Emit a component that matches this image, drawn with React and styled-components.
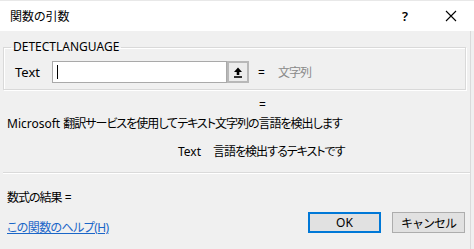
import React from "react";
import styled, { createGlobalStyle } from "styled-components";

const GlobalStyle = createGlobalStyle`
  html, body {
    margin: 0;
    padding: 0;
    background: #f0f0f0;
  }
  body {
    font-family: "Noto Sans", "Noto Sans CJK JP", sans-serif;
    font-size: 12px;
    color: #000;
    font-feature-settings: "palt";
  }
`;

const Dialog = styled.div`
  width: 474px;
  height: 249px;
  display: flex;
  flex-direction: column;
  overflow: hidden;
  background: #f0f0f0;
`;

const TitleBar = styled.div`
  height: 31px;
  flex: none;
  display: flex;
  align-items: center;
  padding-left: 10px;
  background: #fff;
  border-top: 1px solid #e8e8e8;
  box-sizing: border-box;
`;

const Title = styled.span`
  font-size: 12px;
`;

const TitleButton = styled.div`
  margin-left: ${(p) => (p.$first ? "auto" : "0")};
  width: 46px;
  height: 30px;
  display: flex;
  align-items: center;
  justify-content: center;
  font-size: 13px;
  font-weight: 600;
`;

const Body = styled.div`
  flex: 1;
  width: 470px;
  border-right: 1px solid #dadada;
  display: flex;
  flex-direction: column;
`;

const Jp = styled.span`
  letter-spacing: -1px;
`;

const Group = styled.fieldset`
  margin: 8px 0 0 3px;
  width: 463px;
  box-sizing: border-box;
  padding: 6px 10px 6px 11px;
  border: 1px solid #d9d9d9;
  box-shadow: inset 1px 1px 0 #fff, 1px 1px 0 #fff;
  min-width: 0;
`;

const Legend = styled.legend`
  margin-left: -4px;
  padding: 0 2px;
  line-height: 16px;
  font-size: 12px;
`;

const ArgRow = styled.div`
  display: flex;
  align-items: center;
  height: 22px;
`;

const ArgLabel = styled.span`
  width: 37px;
  font-size: 13px;
`;

const InputBox = styled.div`
  width: 175px;
  height: 22px;
  box-sizing: border-box;
  background: #fff;
  border: 1px solid #a9a9a9;
  display: flex;
  align-items: center;
  padding-left: 4px;
`;

const Caret = styled.span`
  width: 1px;
  height: 14px;
  background: #000;
`;

const RefButton = styled.div`
  width: 22px;
  height: 22px;
  box-sizing: border-box;
  border: 2px solid #b8b8b8;
  background: #ececec;
  display: flex;
  align-items: center;
  justify-content: center;
`;

const Equals = styled.span`
  margin-left: 9px;
  width: 20px;
  font-size: 12px;
`;

const ArgValue = styled(Jp)`
  color: #8a8a8a;
`;

const ResultEquals = styled.div`
  margin: 7px 0 0 259px;
  line-height: 16px;
`;

const Description = styled.div`
  margin: 3px 0 0 7px;
  line-height: 16px;
  white-space: nowrap;
`;

const ArgHelp = styled.div`
  margin: 12px 0 0 178px;
  line-height: 16px;
  display: flex;
  gap: 12px;
  white-space: nowrap;
`;

const Separator = styled.div`
  margin: 12px 0 0 3px;
  height: 1px;
  background: #dadada;
  border-bottom: 1px solid #fff;
`;

const FormulaResult = styled.div`
  margin: 16px 0 0 7px;
  line-height: 16px;
`;

const Footer = styled.div`
  margin-top: auto;
  display: flex;
  align-items: center;
  padding: 0 5px 13px 7px;
`;

const HelpLink = styled.a`
  color: #1a66c8;
  text-decoration: underline;
  margin-top: 9px;
  letter-spacing: -0.6px;
  cursor: pointer;
`;

const Button = styled.button`
  margin-left: ${(p) => (p.$first ? "auto" : "11px")};
  width: 73px;
  height: 21px;
  box-sizing: border-box;
  background: #e1e1e1;
  border: ${(p) => (p.$default ? "2px solid #0078d7" : "1px solid #adadad")};
  font-family: inherit;
  font-size: 12px;
  color: #000;
  padding: 0;
`;

function RefIcon() {
  return (
    <svg width="10" height="11" viewBox="0 0 10 11">
      <path d="M5 0.5 L9 5 H6.3 V8 H3.7 V5 H1 Z" fill="#000" />
      <rect x="1" y="9.2" width="8" height="1.6" fill="#000" />
    </svg>
  );
}

export default function App() {
  return (
    <>
      <GlobalStyle />
      <Dialog>
        <TitleBar>
          <Title>関数の引数</Title>
          <TitleButton $first>?</TitleButton>
          <TitleButton>
            <svg width="12" height="12" viewBox="0 0 12 12">
              <path d="M1 1 L11 11 M11 1 L1 11" stroke="#000" strokeWidth="1.1" />
            </svg>
          </TitleButton>
        </TitleBar>
        <Body>
          <Group>
            <Legend>DETECTLANGUAGE</Legend>
            <ArgRow>
              <ArgLabel>Text</ArgLabel>
              <InputBox>
                <Caret />
              </InputBox>
              <RefButton>
                <RefIcon />
              </RefButton>
              <Equals>=</Equals>
              <ArgValue>文字列</ArgValue>
            </ArgRow>
          </Group>
          <ResultEquals>=</ResultEquals>
          <Description>
            Microsoft <Jp>翻訳サービスを使用してテキスト文字列の言語を検出します</Jp>
          </Description>
          <ArgHelp>
            <span>Text</span>
            <Jp>言語を検出するテキストです</Jp>
          </ArgHelp>
          <Separator />
          <FormulaResult>
            <Jp>数式の結果</Jp> =
          </FormulaResult>
          <Footer>
            <HelpLink>この関数のヘルプ(H)</HelpLink>
            <Button $first $default>OK</Button>
            <Button>
              <Jp>キャンセル</Jp>
            </Button>
          </Footer>
        </Body>
      </Dialog>
    </>
  );
}
